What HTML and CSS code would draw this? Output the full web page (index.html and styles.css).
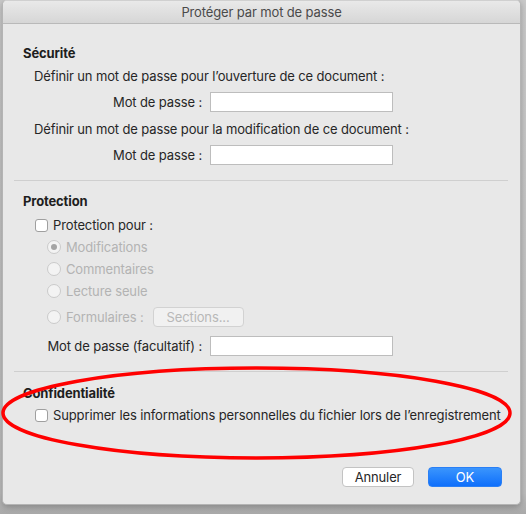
FILE: index.html
```html
<!DOCTYPE html>
<html lang="fr">
<head>
<meta charset="utf-8">
<title>Protéger par mot de passe</title>
<link rel="stylesheet" href="styles.css">
</head>
<body>
<div class="desk">
  <div class="window">
    <div class="titlebar">Protéger par mot de passe</div>
    <div class="content">
      <div class="heading h1">Sécurité</div>
      <div class="text t1">Définir un mot de passe pour l’ouverture de ce document :</div>
      <div class="field r1"><span class="label">Mot de passe :</span><span class="input"></span></div>
      <div class="text t2">Définir un mot de passe pour la modification de ce document :</div>
      <div class="field r2"><span class="label">Mot de passe :</span><span class="input"></span></div>
      <div class="sep s1"></div>
      <div class="heading h2">Protection</div>
      <div class="check c1"><span class="box"></span><span>Protection pour :</span></div>
      <div class="radio rd1"><span class="dot on"></span><span>Modifications</span></div>
      <div class="radio"><span class="dot"></span><span>Commentaires</span></div>
      <div class="radio"><span class="dot"></span><span>Lecture seule</span></div>
      <div class="radio rd4"><span class="dot"></span><span>Formulaires :</span><span class="sections">Sections...</span></div>
      <div class="field r3"><span class="label">Mot de passe (facultatif) :</span><span class="input"></span></div>
      <div class="sep s2"></div>
      <div class="heading h3">Confidentialité</div>
      <div class="check c2"><span class="box"></span><span>Supprimer les informations personnelles du fichier lors de l’enregistrement</span></div>
      <div class="buttons">
        <span class="btn cancel">Annuler</span>
        <span class="btn ok">OK</span>
      </div>
    </div>
  </div>
  <svg class="mark" width="526" height="514" viewBox="0 0 526 514">
    <ellipse cx="256.5" cy="413" rx="253.5" ry="45" fill="none" stroke="#ff0000" stroke-width="3.5"/>
  </svg>
</div>
</body>
</html>
```
FILE: styles.css
```css
html, body {
  margin: 0;
  padding: 0;
}
body {
  width: 526px;
  height: 514px;
  overflow: hidden;
  background: linear-gradient(#c9c9c9, #bdbdbd 96%, #a9a9a9);
  font-family: "Inter", "Liberation Sans", sans-serif;
  font-size: 13px;
  letter-spacing: -0.13px;
  color: #262626;
  white-space: nowrap;
}
.desk {
  position: relative;
  width: 526px;
  height: 514px;
}
.window {
  margin-left: 2px;
  width: 517px;
  height: 503px;
  border: 1px solid #b4b4b4;
  border-top-color: #d0d0d0;
  border-radius: 5px;
  background: #e8e8e8;
  box-shadow: 0 2px 6px rgba(0,0,0,0.25);
  overflow: hidden;
}
.titlebar {
  height: 23px;
  line-height: 22px;
  text-align: center;
  color: #4a4a4a;
  background: linear-gradient(#e9e9e9, #d6d6d6);
  border-bottom: 1px solid #b9b9b9;
  box-sizing: border-box;
}
.content {
  padding: 0 12px 0 11px;
  display: flex;
  flex-direction: column;
}
.heading {
  font-weight: 700;
  color: #1e1e1e;
  line-height: 16px;
  padding-left: 9px;
}
.text {
  line-height: 16px;
  padding-left: 20px;
}
.h1 { margin-top: 21px; }
.t1 { margin-top: 7px; }
.r1 { margin-top: 8px; }
.t2 { margin-top: 9px; }
.r2 { margin-top: 8px; }
.field {
  display: flex;
  align-items: center;
  height: 20px;
  padding-left: 20px;
  gap: 8px;
}
.label {
  width: 168px;
  text-align: right;
}
.input {
  width: 183px;
  height: 20px;
  box-sizing: border-box;
  background: #ffffff;
  border: 1px solid #bdbdbd;
}
.sep {
  height: 1px;
  background: #cfcfcf;
}
.s1 { margin-top: 15px; }
.h2 { margin-top: 12px; }
.check {
  display: flex;
  align-items: center;
  height: 16px;
  padding-left: 21px;
  gap: 5px;
}
.c1 { margin-top: 8px; }
.box {
  flex: none;
  width: 13px;
  height: 13px;
  box-sizing: border-box;
  border: 1px solid #9f9f9f;
  border-radius: 3px;
  background: #ffffff;
}
.radio {
  display: flex;
  align-items: center;
  height: 22px;
  padding-left: 33px;
  gap: 5px;
  color: #b3b3b3;
}
.rd1 { margin-top: 3px; }
.rd4 {
  height: 20px;
  margin-top: 5px;
}
.dot {
  flex: none;
  width: 14px;
  height: 14px;
  box-sizing: border-box;
  border: 1px solid #cacaca;
  border-radius: 50%;
  background: #f3f3f3;
  display: flex;
  align-items: center;
  justify-content: center;
}
.dot.on::after {
  content: "";
  width: 6px;
  height: 6px;
  border-radius: 50%;
  background: #a4a4a4;
}
.sections {
  margin-left: 4px;
  width: 91px;
  height: 20px;
  box-sizing: border-box;
  border: 1px solid #d2d2d2;
  border-radius: 4px;
  background: #f1f1f1;
  color: #b8b8b8;
  text-align: center;
  line-height: 18px;
}
.r3 { margin-top: 9px; }
.s2 { margin-top: 15px; }
.h3 { margin-top: 13px; }
.c2 { margin-top: 6px; }
.buttons {
  margin-top: 44px;
  display: flex;
  justify-content: flex-end;
  gap: 14px;
  padding-right: 6px;
}
.btn {
  height: 20px;
  box-sizing: border-box;
  border-radius: 4px;
  text-align: center;
  line-height: 19px;
}
.cancel {
  width: 72px;
  background: #ffffff;
  border: 1px solid #c3c3c3;
  color: #262626;
}
.ok {
  width: 74px;
  background: linear-gradient(#3a95fd, #0f6ffb);
  border: 1px solid #2a7ff5;
  color: #ffffff;
}
.mark {
  position: absolute;
  left: 0;
  top: 0;
  pointer-events: none;
}
```
